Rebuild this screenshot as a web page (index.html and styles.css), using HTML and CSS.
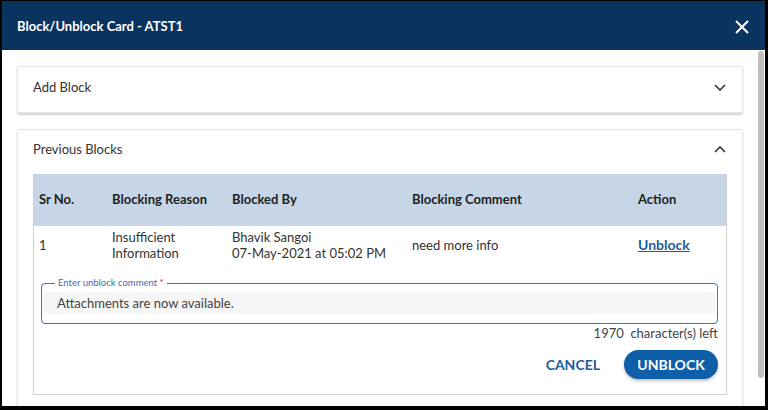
FILE: index.html
```html
<!DOCTYPE html>
<html lang="en">
<head>
    <meta charset="UTF-8">
    <title>Block/Unblock Card</title>
    <link rel="stylesheet" href="styles.css">
</head>
<body>
    <div class="dialog">
        <header class="dialog-header">
            <h1>Block/Unblock Card - ATST1</h1>
            <button class="close-btn" aria-label="Close">
                <svg width="14" height="14" viewBox="0 0 14 14"><path d="M1 1L13 13M13 1L1 13" stroke="#fff" stroke-width="2" fill="none"/></svg>
            </button>
        </header>

        <div class="dialog-body">
            <div class="content">
                <section class="panel">
                    <div class="panel-head">
                        <span>Add Block</span>
                        <svg class="chevron" width="12" height="7" viewBox="0 0 12 7"><path d="M1 1L6 6L11 1" stroke="#333" stroke-width="1.6" fill="none"/></svg>
                    </div>
                </section>

                <section class="panel panel-open">
                    <div class="panel-head">
                        <span>Previous Blocks</span>
                        <svg class="chevron" width="12" height="7" viewBox="0 0 12 7"><path d="M1 6L6 1L11 6" stroke="#333" stroke-width="1.6" fill="none"/></svg>
                    </div>

                    <div class="blocks-box">
                        <table class="blocks">
                            <thead>
                                <tr>
                                    <th class="c-sr">Sr No.</th>
                                    <th class="c-reason">Blocking Reason</th>
                                    <th class="c-by">Blocked By</th>
                                    <th class="c-comment">Blocking Comment</th>
                                    <th>Action</th>
                                </tr>
                            </thead>
                            <tbody>
                                <tr>
                                    <td>1</td>
                                    <td>Insufficient<br>Information</td>
                                    <td>Bhavik Sangoi<br>07-May-2021 at 05:02 PM</td>
                                    <td>need more info</td>
                                    <td><a href="#" class="unblock-link">Unblock</a></td>
                                </tr>
                            </tbody>
                        </table>

                        <div class="unblock-form">
                            <fieldset class="field">
                                <legend>Enter unblock comment <span class="req">*</span></legend>
                                <input type="text" value="Attachments are now available.">
                            </fieldset>
                            <div class="char-count">1970&nbsp; character(s) left</div>
                            <div class="actions">
                                <button class="btn-text">CANCEL</button>
                                <button class="btn-primary">UNBLOCK</button>
                            </div>
                        </div>
                    </div>
                </section>
            </div>
            <div class="scrollbar"><div class="thumb"></div></div>
        </div>
    </div>
</body>
</html>
```

FILE: styles.css
```css
* {
    margin: 0;
    padding: 0;
    box-sizing: border-box;
}

body {
    background: #000;
    font-family: Lato, "Open Sans", sans-serif;
    color: #333;
    height: 410px;
    overflow: hidden;
    padding: 1px 3px 4px 2px;
}

.dialog {
    height: 405px;
    background: #fff;
    display: flex;
    flex-direction: column;
    overflow: hidden;
}

.dialog-header {
    height: 49px;
    flex-shrink: 0;
    background: #0b335f;
    display: flex;
    align-items: center;
    justify-content: space-between;
    padding: 0 15px;
}

.dialog-header h1 {
    color: #fff;
    font-size: 13px;
    font-weight: 700;
}

.close-btn {
    background: none;
    border: none;
    display: flex;
    margin-top: 2px;
    margin-right: 1px;
}

.dialog-body {
    flex: 1;
    display: flex;
    overflow: hidden;
}

.content {
    flex: 1;
    padding: 16px 15px 0;
}

.scrollbar {
    width: 7px;
    padding-top: 1px;
}

.thumb {
    width: 6px;
    height: 327px;
    background: #c2bebe;
    border-radius: 3px;
}

/* panneaux */
.panel {
    border: 1px solid #e6e6e6;
    border-radius: 2px;
    box-shadow: 0 2px 2px rgba(0, 0, 0, 0.18);
    margin-bottom: 16px;
    font-size: 13px;
    color: #333;
}

.panel-head {
    height: 45px;
    display: flex;
    align-items: center;
    justify-content: space-between;
    padding: 0 16px 5px 15px;
}

.panel-open {
    padding-bottom: 16px;
}

.panel-open .panel-head {
    height: 44px;
    padding-bottom: 6px;
}

.blocks-box {
    margin: 0 15px;
    border: 1px solid #cfcfcf;
    border-top: none;
    height: 221px;
}

.blocks {
    width: 100%;
    border-collapse: collapse;
    table-layout: fixed;
    font-size: 13px;
}

.blocks th {
    background: #c6d6e6;
    text-align: left;
    font-weight: 700;
    color: #222;
    height: 52px;
    padding: 0 5px 2px;
}

.blocks td {
    padding: 3px 5px 7px;
    line-height: 16px;
    color: #333;
    vertical-align: middle;
}

.c-sr { width: 73px; }
.c-reason { width: 120px; }
.c-by { width: 180px; }
.c-comment { width: 226px; }

.blocks td .unblock-link {
    color: #1d5c9f;
    font-size: 14px;
    font-weight: 700;
    text-decoration: underline;
}

.unblock-form {
    padding: 10px 8px 0 7px;
}

.field {
    border: 1px solid #3a77b6;
    border-radius: 4px;
    padding: 4px 1px 9px;
    height: 46px;
}

.field legend {
    font-size: 9.5px;
    color: #4b66b3;
    margin-left: 12px;
    padding: 0 3px;
    line-height: 10px;
}

.req {
    color: #d32f2f;
}

.field input {
    width: 100%;
    border: none;
    outline: none;
    background: #f6f6f6;
    font-family: inherit;
    font-size: 13px;
    color: #444;
    height: 22px;
    padding: 0 14px;
}

.char-count {
    text-align: right;
    font-size: 13px;
    color: #444;
    line-height: 16px;
    margin-top: 1px;
}

.actions {
    display: flex;
    justify-content: flex-end;
    align-items: center;
    gap: 24px;
    margin-top: 9px;
}

.btn-text {
    background: none;
    border: none;
    font-family: inherit;
    font-size: 14px;
    font-weight: 700;
    color: #1d5c9f;
}

.btn-primary {
    background: #0e5eaa;
    border: none;
    border-radius: 15px;
    color: #fff;
    font-family: inherit;
    font-size: 14px;
    font-weight: 700;
    height: 29px;
    width: 94px;
    box-shadow: 0 2px 3px rgba(0, 0, 0, 0.25);
}
```
